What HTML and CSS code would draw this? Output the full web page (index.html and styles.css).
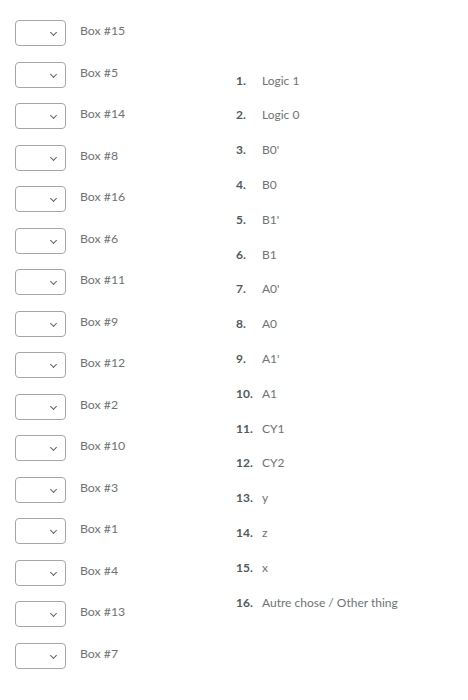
FILE: index.html
```html
<!DOCTYPE html>
<html lang="en">
<head>
  <meta charset="UTF-8">
  <title>Matching</title>
  <link rel="stylesheet" href="styles.css">
</head>
<body>
  <div class="question">
    <div class="boxes">
      <div class="row"><div class="select"><span class="chevron"></span></div><span class="label">Box #15</span></div>
      <div class="row"><div class="select"><span class="chevron"></span></div><span class="label">Box #5</span></div>
      <div class="row"><div class="select"><span class="chevron"></span></div><span class="label">Box #14</span></div>
      <div class="row"><div class="select"><span class="chevron"></span></div><span class="label">Box #8</span></div>
      <div class="row"><div class="select"><span class="chevron"></span></div><span class="label">Box #16</span></div>
      <div class="row"><div class="select"><span class="chevron"></span></div><span class="label">Box #6</span></div>
      <div class="row"><div class="select"><span class="chevron"></span></div><span class="label">Box #11</span></div>
      <div class="row"><div class="select"><span class="chevron"></span></div><span class="label">Box #9</span></div>
      <div class="row"><div class="select"><span class="chevron"></span></div><span class="label">Box #12</span></div>
      <div class="row"><div class="select"><span class="chevron"></span></div><span class="label">Box #2</span></div>
      <div class="row"><div class="select"><span class="chevron"></span></div><span class="label">Box #10</span></div>
      <div class="row"><div class="select"><span class="chevron"></span></div><span class="label">Box #3</span></div>
      <div class="row"><div class="select"><span class="chevron"></span></div><span class="label">Box #1</span></div>
      <div class="row"><div class="select"><span class="chevron"></span></div><span class="label">Box #4</span></div>
      <div class="row"><div class="select"><span class="chevron"></span></div><span class="label">Box #13</span></div>
      <div class="row"><div class="select"><span class="chevron"></span></div><span class="label">Box #7</span></div>
    </div>

    <ol class="choices">
      <li><span class="num">1.</span>Logic 1</li>
      <li><span class="num">2.</span>Logic 0</li>
      <li><span class="num">3.</span>B0'</li>
      <li><span class="num">4.</span>B0</li>
      <li><span class="num">5.</span>B1'</li>
      <li><span class="num">6.</span>B1</li>
      <li><span class="num">7.</span>A0'</li>
      <li><span class="num">8.</span>A0</li>
      <li><span class="num">9.</span>A1'</li>
      <li><span class="num">10.</span>A1</li>
      <li><span class="num">11.</span>CY1</li>
      <li><span class="num">12.</span>CY2</li>
      <li><span class="num">13.</span>y</li>
      <li><span class="num">14.</span>z</li>
      <li><span class="num">15.</span>x</li>
      <li><span class="num">16.</span>Autre chose / Other thing</li>
    </ol>
  </div>
</body>
</html>
```

FILE: styles.css
```css
body {
  margin: 0;
  font-family: Lato, sans-serif;
  background-color: #ffffff;
}
.question {
  display: flex;
  padding: 20px 0 0 15px;
}
.boxes {
  display: flex;
  flex-direction: column;
  gap: 15.5px;
  width: 221px;
}
.row {
  display: flex;
  align-items: center;
  height: 26px;
}
.select {
  box-sizing: border-box;
  width: 51px;
  height: 26px;
  border: 1px solid #a3a7ab;
  border-radius: 4px;
  position: relative;
  margin-right: 14px;
}
.chevron {
  position: absolute;
  left: 35px;
  top: 9px;
  width: 4px;
  height: 4px;
  border-right: 1.4px solid #5f6468;
  border-bottom: 1.4px solid #5f6468;
  transform: rotate(45deg);
}
.label {
  font-size: 12.3px;
  color: #6e7376;
  margin-top: -5px;
}
.choices {
  list-style: none;
  margin: 0;
  padding: 43.6px 0 0 0;
}
.choices li {
  line-height: 34.8px;
  font-size: 12px;
  color: #6e7376;
}
.num {
  display: inline-block;
  width: 26px;
  color: #55595c;
  font-weight: bold;
}
```
